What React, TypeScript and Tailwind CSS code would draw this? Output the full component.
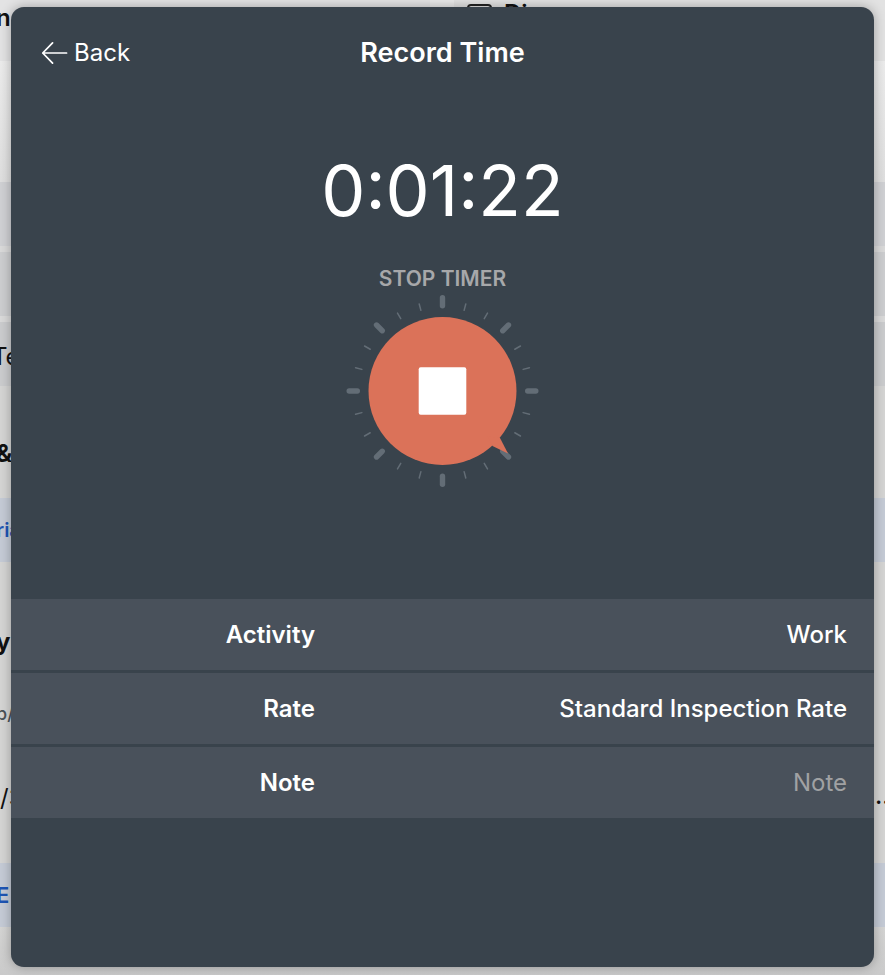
const majorTicks = [0, 45, 90, 135, 180, 225, 270, 315];
const minorTicks = [15, 30, 60, 75, 105, 120, 150, 165, 195, 210, 240, 255, 285, 300, 330, 345];

function PageBehind() {
  return (
    <div aria-hidden="true" className="min-h-screen flex flex-col overflow-hidden bg-[#d5d5d4] text-2xl text-[#111111]">
      {/* Toolbar */}
      <div className="h-[61px] flex bg-[#e3e3e4] font-semibold">
        <div className="w-[430px] leading-9 -indent-1">n</div>
        <div className="w-6 bg-[#eaeaea]" />
        <div className="flex-1 flex gap-3 pl-3 pt-1 bg-[#e2e2e2]">
          <svg width="26" height="22" viewBox="0 0 26 22" fill="none" stroke="#222" strokeWidth="2">
            <rect x="2" y="1" width="23" height="20" rx="3" />
          </svg>
          <span className="font-semibold leading-5">Di</span>
        </div>
      </div>
      <div className="h-[121px] bg-linear-to-b from-[#ececec] to-[#dfdfdf]" />

      {/* Details */}
      <div className="flex flex-col gap-[6px] bg-[#dadada]">
        <div className="h-16 bg-[#d0d1d4]" />
        <div className="h-16 bg-[#cdced0]" />
        <div className="h-16 bg-[#cbccce] leading-[70px] -indent-2">Te</div>
      </div>
      <div className="h-28 pt-12 font-bold leading-10 -indent-1">&amp;</div>
      <div className="h-16 bg-[#c5cbd6] text-[20px] font-semibold text-[#1d55b5] leading-[64px] -indent-1">ria</div>
      <div className="h-[301px]">
        <div className="pt-16 font-bold leading-8 -indent-1">y</div>
        <div className="pt-10 text-lg font-medium leading-8 text-[#4b5359] -indent-1">p/</div>
        <div className="pt-12 flex justify-between leading-10">
          <span>/3</span>
          <span className="w-[10px] font-medium leading-9">…</span>
        </div>
      </div>
      <div className="h-16 bg-[#c5cbd6] text-[22px] font-semibold text-[#1d55b5] leading-[64px] -indent-1">E</div>
      <div className="flex-1 bg-linear-to-b from-[#d5d5d4] to-[#cacaca]" />
    </div>
  );
}

function StopButton() {
  return (
    <button type="button" aria-label="Stop timer" className="block rounded-full">
      <svg width="193" height="194" viewBox="-96.5 -97 193 194">
        <g stroke="#636d76" strokeLinecap="round">
          {majorTicks.map((angle) => (
            <line key={angle} y1="-93.3" y2="-85.2" strokeWidth="5.4" transform={`rotate(${angle})`} />
          ))}
          {minorTicks.map((angle) => (
            <line key={angle} y1="-90" y2="-83.5" strokeWidth="1.5" transform={`rotate(${angle})`} />
          ))}
        </g>
        <circle r="74" fill="#db7259" />
        <path d="M50 55 L65.5 62.5 L57.5 47 L45 45 Z" fill="#db7259" />
        <rect x="-23.8" y="-23.8" width="47.6" height="47.6" rx="2" fill="#fff" />
      </svg>
    </button>
  );
}

function RecordTime() {
  return (
    <div
      role="dialog"
      aria-labelledby="title"
      className="absolute inset-x-[11px] top-[7px] bottom-2 overflow-hidden rounded-[13px] bg-[#39434c] text-white shadow-[0_0_12px_rgba(0,0,0,0.3)]"
    >
      {/* Header */}
      <header className="h-[92px] grid grid-cols-[1fr_auto_1fr] items-center px-[30px]">
        <button type="button" className="flex items-center gap-[6px] justify-self-start text-2xl">
          <svg width="27" height="24" viewBox="0 0 28 24" fill="none" stroke="currentColor" strokeWidth="1.8" strokeLinecap="round" strokeLinejoin="round">
            <path d="M26.5 12H1.8M12 1.5L1.8 12L12 22.5" />
          </svg>
          Back
        </button>
        <h1 id="title" className="text-[27px] leading-9 font-semibold">Record Time</h1>
      </header>

      {/* Timer */}
      <section className="flex flex-col items-center pt-12">
        <div role="timer" className="text-[70px] leading-[88px]">0:01:22</div>
        <p className="mt-[29px] text-[21px] leading-[30px] font-semibold text-[#a7a8aa]">STOP TIMER</p>
        <StopButton />
      </section>

      {/* Settings */}
      <form className="mt-[111px] flex flex-col gap-[3px] text-2xl">
        <div className="h-[71px] flex items-center bg-[#49515b] pr-[27px]">
          <label htmlFor="activity" className="w-76 text-right font-semibold">Activity</label>
          <select id="activity" className="min-w-0 flex-1 appearance-none bg-transparent text-right font-medium [text-align-last:right]">
            <option>Work</option>
          </select>
        </div>
        <div className="h-[71px] flex items-center bg-[#49515b] pr-[27px]">
          <label htmlFor="rate" className="w-76 text-right font-semibold">Rate</label>
          <select id="rate" className="min-w-0 flex-1 appearance-none bg-transparent text-right font-medium [text-align-last:right]">
            <option>Standard Inspection Rate</option>
          </select>
        </div>
        <div className="h-[71px] flex items-center bg-[#49515b] pr-[27px]">
          <label htmlFor="note" className="w-76 text-right font-semibold">Note</label>
          <input
            id="note"
            type="text"
            placeholder="Note"
            className="min-w-0 flex-1 bg-transparent text-right placeholder:text-[#a0a1a3]"
          />
        </div>
      </form>
    </div>
  );
}

export default function App() {
  return (
    <div className="relative font-[Inter,sans-serif]">
      <PageBehind />
      <RecordTime />
    </div>
  );
}
